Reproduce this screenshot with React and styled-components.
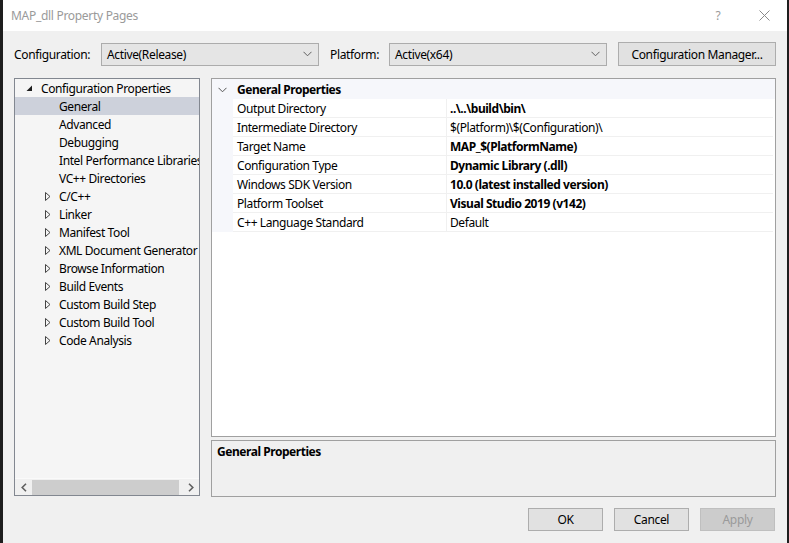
import React from "react";
import styled, { createGlobalStyle } from "styled-components";

const Global = createGlobalStyle`
  html, body { margin: 0; padding: 0; background: #1f1f1f; }
  body { font-family: "Noto Sans", "Open Sans", sans-serif; font-size: 12px; color: #000; }
  * { box-sizing: border-box; }
`;

const Desktop = styled.div`
  width: 789px;
  height: 543px;
  padding: 0 3px;
  overflow: hidden;
  background: #1e1e1e;
`;

const Window = styled.div`
  width: 784px;
  height: 543px;
  background: #f0f0f0;
  display: flex;
  flex-direction: column;
  overflow: hidden;
`;

const TitleBar = styled.div`
  height: 31px;
  flex: none;
  background: #fff;
  display: flex;
  align-items: center;
  padding-left: 8px;
  color: #9a9a9a;
  font-size: 12px;
`;

const Title = styled.div`
  flex: 1;
  letter-spacing: -0.3px;
`;

const TitleBtn = styled.div`
  width: ${p => p.$w}px;
  height: 31px;
  display: flex;
  align-items: center;
  justify-content: center;
  color: #9a9a9a;
  font-size: 12px;
`;

const Toolbar = styled.div`
  margin-top: 11px;
  height: 24px;
  flex: none;
  display: flex;
  align-items: center;
  padding-left: 11px;
`;

const Label = styled.div`
  width: ${p => p.$w}px;
  letter-spacing: -0.35px;
`;

const Select = styled.div`
  width: ${p => p.$w}px;
  height: 23px;
  background: #e5e5e5;
  border: 1px solid #acacac;
  display: flex;
  align-items: center;
  padding: 0 6px 0 5px;
  margin-right: ${p => p.$mr || 0}px;
  letter-spacing: -0.35px;
`;

const SelectText = styled.div`
  flex: 1;
`;

const Button = styled.div`
  width: ${p => p.$w}px;
  height: ${p => p.$h || 23}px;
  background: ${p => (p.$disabled ? "#cccccc" : "#e1e1e1")};
  border: 1px solid ${p => (p.$disabled ? "#bfbfbf" : "#adadad")};
  color: ${p => (p.$disabled ? "#9a9a9a" : "#000")};
  display: flex;
  align-items: center;
  justify-content: center;
  letter-spacing: -0.35px;
`;

const Main = styled.div`
  margin-top: 12px;
  height: 419px;
  flex: none;
  display: flex;
  padding-left: 11px;
  gap: 11px;
`;

const Tree = styled.div`
  width: 186px;
  height: 418px;
  border: 1px solid #828790;
  background: #f5f5f5;
  display: flex;
  flex-direction: column;
`;

const TreeBody = styled.div`
  flex: 1;
  overflow: hidden;
`;

const TreeRow = styled.div`
  height: 18px;
  display: flex;
  align-items: center;
  white-space: nowrap;
  overflow: hidden;
  padding-left: ${p => p.$indent}px;
  background: ${p => (p.$selected ? "#cdd1db" : "transparent")};
  letter-spacing: -0.4px;
`;

const Arrow = styled.div`
  width: ${p => p.$w}px;
  flex: none;
  display: flex;
  align-items: center;
`;

const HScroll = styled.div`
  height: 17px;
  flex: none;
  display: flex;
  align-items: center;
  background: #f0f0f0;
  border-top: 1px solid #fafafa;
`;

const ScrollArrow = styled.div`
  width: 17px;
  height: 17px;
  display: flex;
  align-items: center;
  justify-content: center;
`;

const Thumb = styled.div`
  flex: 1;
  height: 15px;
  background: #cdcdcd;
  margin-right: 3px;
`;

const RightCol = styled.div`
  width: 565px;
  display: flex;
  flex-direction: column;
  gap: 3px;
`;

const Grid = styled.div`
  height: 360px;
  border: 1px solid #a0a0a0;
  background: #fff;
  display: grid;
  grid-template-columns: 21px 214px 1fr;
  grid-template-rows: 20px;
  grid-auto-rows: 19px;
  align-content: start;
`;

const GroupRow = styled.div`
  grid-column: 1 / 4;
  display: flex;
  align-items: center;
  padding-top: 1px;
  background: #f6f7fb;
  font-weight: 700;
  letter-spacing: -0.45px;
`;

const Gutter = styled.div`
  background: #f6f7fb;
`;

const NameCell = styled.div`
  display: flex;
  align-items: center;
  padding-left: 4px;
  border-bottom: 1px solid #f0f0f0;
  border-right: 1px solid #f0f0f0;
  white-space: nowrap;
  letter-spacing: -0.4px;
`;

const ValueCell = styled.div`
  display: flex;
  align-items: center;
  padding-left: 3px;
  border-bottom: 1px solid #f0f0f0;
  margin-right: 2px;
  white-space: nowrap;
  font-weight: ${p => (p.$bold ? 700 : 400)};
  letter-spacing: ${p => (p.$bold ? "-0.45px" : "-0.4px")};
`;

const Desc = styled.div`
  height: 57px;
  border: 1px solid #a0a0a0;
  background: #f0f0f0;
  padding: 2px 5px;
  font-weight: 700;
  letter-spacing: -0.45px;
`;

const Footer = styled.div`
  margin-top: 11px;
  display: flex;
  justify-content: flex-end;
  gap: 11px;
  padding-right: 12px;
`;

const Chevron = ({ color = "#606060" }) => (
  <svg width="9" height="6" viewBox="0 0 9 6">
    <polyline points="0.5,0.8 4.5,4.8 8.5,0.8" fill="none" stroke={color} strokeWidth="1" />
  </svg>
);

const Expanded = () => (
  <svg width="7" height="7" viewBox="0 0 7 7">
    <polygon points="6,0.5 6,6 0.5,6" fill="#1e1e1e" />
  </svg>
);

const Collapsed = () => (
  <svg width="6" height="9" viewBox="0 0 6 9">
    <polygon points="0.5,0.5 5,4.5 0.5,8.5" fill="none" stroke="#444" strokeWidth="1" />
  </svg>
);

const treeItems = [
  { label: "Configuration Properties", level: 0, state: "open" },
  { label: "General", level: 1, selected: true },
  { label: "Advanced", level: 1 },
  { label: "Debugging", level: 1 },
  { label: "Intel Performance Libraries", level: 1 },
  { label: "VC++ Directories", level: 1 },
  { label: "C/C++", level: 1, state: "closed" },
  { label: "Linker", level: 1, state: "closed" },
  { label: "Manifest Tool", level: 1, state: "closed" },
  { label: "XML Document Generator", level: 1, state: "closed" },
  { label: "Browse Information", level: 1, state: "closed" },
  { label: "Build Events", level: 1, state: "closed" },
  { label: "Custom Build Step", level: 1, state: "closed" },
  { label: "Custom Build Tool", level: 1, state: "closed" },
  { label: "Code Analysis", level: 1, state: "closed" },
];

const props = [
  ["Output Directory", "..\\..\\build\\bin\\", true],
  ["Intermediate Directory", "$(Platform)\\$(Configuration)\\", false],
  ["Target Name", "MAP_$(PlatformName)", true],
  ["Configuration Type", "Dynamic Library (.dll)", true],
  ["Windows SDK Version", "10.0 (latest installed version)", true],
  ["Platform Toolset", "Visual Studio 2019 (v142)", true],
  ["C++ Language Standard", "Default", false],
];

export default function App() {
  return (
    <>
      <Global />
      <Desktop>
        <Window>
          <TitleBar>
            <Title>MAP_dll Property Pages</Title>
            <TitleBtn $w={46}>?</TitleBtn>
            <TitleBtn $w={46}>
              <svg width="11" height="11" viewBox="0 0 11 11">
                <path d="M0.5 0.5 L10.5 10.5 M10.5 0.5 L0.5 10.5" stroke="#8a8a8a" strokeWidth="1" />
              </svg>
            </TitleBtn>
          </TitleBar>

          <Toolbar>
            <Label $w={87}>Configuration:</Label>
            <Select $w={218} $mr={11}>
              <SelectText>Active(Release)</SelectText>
              <Chevron />
            </Select>
            <Label $w={59}>Platform:</Label>
            <Select $w={218} $mr={11}>
              <SelectText>Active(x64)</SelectText>
              <Chevron />
            </Select>
            <Button $w={158} $h={24}>Configuration Manager...</Button>
          </Toolbar>

          <Main>
            <Tree>
              <TreeBody>
                {treeItems.map(it => (
                  <TreeRow key={it.label} $indent={it.level === 0 ? 11 : 30} $selected={it.selected}>
                    <Arrow $w={it.level === 0 ? 15 : 14}>
                      {it.state === "open" && <Expanded />}
                      {it.state === "closed" && <Collapsed />}
                    </Arrow>
                    {it.label}
                  </TreeRow>
                ))}
              </TreeBody>
              <HScroll>
                <ScrollArrow>
                  <svg width="6" height="9" viewBox="0 0 6 9">
                    <polyline points="5,0.8 1.2,4.5 5,8.2" fill="none" stroke="#606060" strokeWidth="1.6" />
                  </svg>
                </ScrollArrow>
                <Thumb />
                <ScrollArrow>
                  <svg width="6" height="9" viewBox="0 0 6 9">
                    <polyline points="1,0.8 4.8,4.5 1,8.2" fill="none" stroke="#606060" strokeWidth="1.6" />
                  </svg>
                </ScrollArrow>
              </HScroll>
            </Tree>

            <RightCol>
              <Grid>
                <GroupRow>
                  <Arrow $w={25} style={{ paddingLeft: 6 }}>
                    <Chevron color="#555" />
                  </Arrow>
                  General Properties
                </GroupRow>
                {props.map(([name, value, bold]) => (
                  <React.Fragment key={name}>
                    <Gutter />
                    <NameCell>{name}</NameCell>
                    <ValueCell $bold={bold}>{value}</ValueCell>
                  </React.Fragment>
                ))}
              </Grid>
              <Desc>General Properties</Desc>
            </RightCol>
          </Main>

          <Footer>
            <Button $w={75}>OK</Button>
            <Button $w={75}>Cancel</Button>
            <Button $w={75} $disabled>Apply</Button>
          </Footer>
        </Window>
      </Desktop>
    </>
  );
}
